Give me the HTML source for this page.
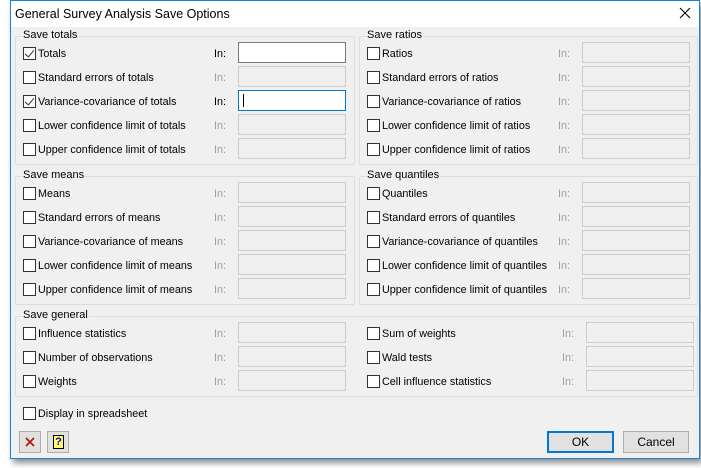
<!DOCTYPE html>
<html><head><meta charset="utf-8"><style>
*{box-sizing:border-box;margin:0;padding:0}
body{width:701px;height:468px;background:#fff;position:relative;overflow:hidden;font-family:"Liberation Sans",sans-serif;font-size:10.8px;color:#000}
.win{position:absolute;left:10px;top:0;width:690px;height:459px;border:1px solid #1883d7;background:#f0f0f0;box-shadow:3px 4px 6px rgba(0,0,0,.45)}
.tb{position:absolute;left:0;top:0;right:0;height:26px;background:#fff}
.title{position:absolute;left:4px;top:6px;font-size:12.5px}
.close{position:absolute;right:8px;top:6px}
.g{position:absolute;border:1px solid #dcdcdc;border-radius:2px}
.gl{position:absolute;top:-8px;left:6px;background:#f0f0f0;padding:0 1px;font-size:11px}
.a{position:absolute;white-space:nowrap;margin-top:2px}
.cb{position:absolute;width:13px;height:13px;border:1px solid #333;background:#fff}
.ck::after{content:"";position:absolute;left:3px;top:0px;width:4px;height:8px;border-right:1.5px solid #333;border-bottom:1.5px solid #333;transform:rotate(40deg)}
.in{position:absolute;width:108px;height:21px;border:1px solid #ccc;background:#f0f0f0}
.in.on{background:#fff;border-color:#7a7a7a}
.in.foc{border-color:#0078d7}
.lab{position:absolute;color:#a0a0a0;margin-top:2px}
.lab.on{color:#000}
.btn{position:absolute;height:22px;border:1px solid #adadad;background:#e1e1e1;text-align:center;line-height:20px;font-size:12px}
</style></head><body>
<div class="win">
<div class="tb"><div class="title">General Survey Analysis Save Options</div><svg class="close" width="12" height="12" viewBox="0 0 12 12"><path d="M1 1L11 11M11 1L1 11" stroke="#000" stroke-width="1.1"/></svg></div>
</div>

<div class="g" style="left:15px;top:36px;width:340px;height:129px"><span class="gl">Save totals</span></div>
<div class="g" style="left:359px;top:36px;width:339px;height:129px"><span class="gl">Save ratios</span></div>
<div class="g" style="left:15px;top:176px;width:340px;height:129px"><span class="gl">Save means</span></div>
<div class="g" style="left:359px;top:176px;width:339px;height:129px"><span class="gl">Save quantiles</span></div>
<div class="g" style="left:15px;top:316px;width:683px;height:81px"><span class="gl">Save general</span></div>

<div class="cb ck" style="left:23px;top:47px"></div><span class="a" style="left:38px;top:46px">Totals</span><span class="lab on" style="left:214px;top:46px">In:</span><div class="in on" style="left:238px;top:42px"></div>
<div class="cb" style="left:23px;top:71px"></div><span class="a" style="left:38px;top:70px">Standard errors of totals</span><span class="lab" style="left:214px;top:70px">In:</span><div class="in" style="left:238px;top:66px"></div>
<div class="cb ck" style="left:23px;top:95px"></div><span class="a" style="left:38px;top:94px">Variance-covariance of totals</span><span class="lab on" style="left:214px;top:94px">In:</span><div class="in on foc" style="left:238px;top:90px"><div style="position:absolute;left:4px;top:3px;width:1px;height:13px;background:#000"></div></div>
<div class="cb" style="left:23px;top:119px"></div><span class="a" style="left:38px;top:118px">Lower confidence limit of totals</span><span class="lab" style="left:214px;top:118px">In:</span><div class="in" style="left:238px;top:114px"></div>
<div class="cb" style="left:23px;top:143px"></div><span class="a" style="left:38px;top:142px">Upper confidence limit of totals</span><span class="lab" style="left:214px;top:142px">In:</span><div class="in" style="left:238px;top:138px"></div>

<div class="cb" style="left:367px;top:47px"></div><span class="a" style="left:382px;top:46px">Ratios</span><span class="lab" style="left:558px;top:46px">In:</span><div class="in" style="left:582px;top:42px"></div>
<div class="cb" style="left:367px;top:71px"></div><span class="a" style="left:382px;top:70px">Standard errors of ratios</span><span class="lab" style="left:558px;top:70px">In:</span><div class="in" style="left:582px;top:66px"></div>
<div class="cb" style="left:367px;top:95px"></div><span class="a" style="left:382px;top:94px">Variance-covariance of ratios</span><span class="lab" style="left:558px;top:94px">In:</span><div class="in" style="left:582px;top:90px"></div>
<div class="cb" style="left:367px;top:119px"></div><span class="a" style="left:382px;top:118px">Lower confidence limit of ratios</span><span class="lab" style="left:558px;top:118px">In:</span><div class="in" style="left:582px;top:114px"></div>
<div class="cb" style="left:367px;top:143px"></div><span class="a" style="left:382px;top:142px">Upper confidence limit of ratios</span><span class="lab" style="left:558px;top:142px">In:</span><div class="in" style="left:582px;top:138px"></div>

<div class="cb" style="left:23px;top:187px"></div><span class="a" style="left:38px;top:186px">Means</span><span class="lab" style="left:214px;top:186px">In:</span><div class="in" style="left:238px;top:182px"></div>
<div class="cb" style="left:23px;top:211px"></div><span class="a" style="left:38px;top:210px">Standard errors of means</span><span class="lab" style="left:214px;top:210px">In:</span><div class="in" style="left:238px;top:206px"></div>
<div class="cb" style="left:23px;top:235px"></div><span class="a" style="left:38px;top:234px">Variance-covariance of means</span><span class="lab" style="left:214px;top:234px">In:</span><div class="in" style="left:238px;top:230px"></div>
<div class="cb" style="left:23px;top:259px"></div><span class="a" style="left:38px;top:258px">Lower confidence limit of means</span><span class="lab" style="left:214px;top:258px">In:</span><div class="in" style="left:238px;top:254px"></div>
<div class="cb" style="left:23px;top:283px"></div><span class="a" style="left:38px;top:282px">Upper confidence limit of means</span><span class="lab" style="left:214px;top:282px">In:</span><div class="in" style="left:238px;top:278px"></div>

<div class="cb" style="left:367px;top:187px"></div><span class="a" style="left:382px;top:186px">Quantiles</span><span class="lab" style="left:558px;top:186px">In:</span><div class="in" style="left:582px;top:182px"></div>
<div class="cb" style="left:367px;top:211px"></div><span class="a" style="left:382px;top:210px">Standard errors of quantiles</span><span class="lab" style="left:558px;top:210px">In:</span><div class="in" style="left:582px;top:206px"></div>
<div class="cb" style="left:367px;top:235px"></div><span class="a" style="left:382px;top:234px">Variance-covariance of quantiles</span><span class="lab" style="left:558px;top:234px">In:</span><div class="in" style="left:582px;top:230px"></div>
<div class="cb" style="left:367px;top:259px"></div><span class="a" style="left:382px;top:258px">Lower confidence limit of quantiles</span><span class="lab" style="left:558px;top:258px">In:</span><div class="in" style="left:582px;top:254px"></div>
<div class="cb" style="left:367px;top:283px"></div><span class="a" style="left:382px;top:282px">Upper confidence limit of quantiles</span><span class="lab" style="left:558px;top:282px">In:</span><div class="in" style="left:582px;top:278px"></div>

<div class="cb" style="left:23px;top:327px"></div><span class="a" style="left:38px;top:326px">Influence statistics</span><span class="lab" style="left:214px;top:326px">In:</span><div class="in" style="left:238px;top:322px"></div>
<div class="cb" style="left:23px;top:351px"></div><span class="a" style="left:38px;top:350px">Number of observations</span><span class="lab" style="left:214px;top:350px">In:</span><div class="in" style="left:238px;top:346px"></div>
<div class="cb" style="left:23px;top:375px"></div><span class="a" style="left:38px;top:374px">Weights</span><span class="lab" style="left:214px;top:374px">In:</span><div class="in" style="left:238px;top:370px"></div>
<div class="cb" style="left:367px;top:327px"></div><span class="a" style="left:382px;top:326px">Sum of weights</span><span class="lab" style="left:562px;top:326px">In:</span><div class="in" style="left:586px;top:322px"></div>
<div class="cb" style="left:367px;top:351px"></div><span class="a" style="left:382px;top:350px">Wald tests</span><span class="lab" style="left:562px;top:350px">In:</span><div class="in" style="left:586px;top:346px"></div>
<div class="cb" style="left:367px;top:375px"></div><span class="a" style="left:382px;top:374px">Cell influence statistics</span><span class="lab" style="left:562px;top:374px">In:</span><div class="in" style="left:586px;top:370px"></div>

<div class="cb" style="left:23px;top:407px"></div><span class="a" style="left:38px;top:406px">Display in spreadsheet</span>

<div class="btn" style="left:19px;top:431px;width:22px"><svg style="position:absolute;left:5px;top:5px" width="10" height="10" viewBox="0 0 10 10"><path d="M1 1L9 9M9 1L1 9" stroke="#b01010" stroke-width="1.6"/></svg></div>
<div class="btn" style="left:47px;top:431px;width:22px"><div style="position:absolute;left:5px;top:3px;width:11px;height:14px;border:1px solid #000;background:#ffff70;color:#0000c0;font-size:11px;line-height:12px;font-weight:bold">?</div></div>
<div class="btn" style="left:547px;top:431px;width:67px;border:2px solid #0078d7;line-height:18px">OK</div>
<div class="btn" style="left:623px;top:431px;width:66px">Cancel</div>
</body></html>
